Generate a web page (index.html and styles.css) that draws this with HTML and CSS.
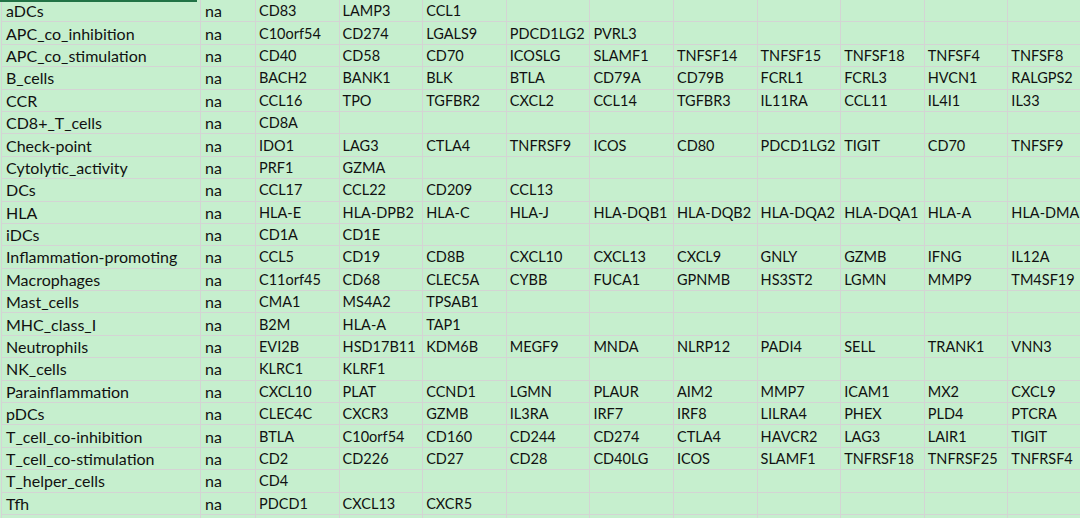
FILE: index.html
```html
<!DOCTYPE html>
<html>
<head>
<meta charset="utf-8">
<link rel="stylesheet" href="styles.css">
</head>
<body>
<div class="sheet">
  <div class="selection"></div>
  <table class="grid">
    <colgroup>
      <col class="col-a"><col class="col-b">
      <col class="col-g"><col class="col-g"><col class="col-g"><col class="col-g"><col class="col-g">
      <col class="col-g"><col class="col-g"><col class="col-g"><col class="col-g"><col class="col-g">
    </colgroup>
    <tbody>
      <tr><td>aDCs</td><td>na</td><td>CD83</td><td>LAMP3</td><td>CCL1</td><td></td><td></td><td></td><td></td><td></td><td></td><td></td></tr>
      <tr><td>APC_co_inhibition</td><td>na</td><td>C10orf54</td><td>CD274</td><td>LGALS9</td><td>PDCD1LG2</td><td>PVRL3</td><td></td><td></td><td></td><td></td><td></td></tr>
      <tr><td>APC_co_stimulation</td><td>na</td><td>CD40</td><td>CD58</td><td>CD70</td><td>ICOSLG</td><td>SLAMF1</td><td>TNFSF14</td><td>TNFSF15</td><td>TNFSF18</td><td>TNFSF4</td><td>TNFSF8</td></tr>
      <tr><td>B_cells</td><td>na</td><td>BACH2</td><td>BANK1</td><td>BLK</td><td>BTLA</td><td>CD79A</td><td>CD79B</td><td>FCRL1</td><td>FCRL3</td><td>HVCN1</td><td>RALGPS2</td></tr>
      <tr><td>CCR</td><td>na</td><td>CCL16</td><td>TPO</td><td>TGFBR2</td><td>CXCL2</td><td>CCL14</td><td>TGFBR3</td><td>IL11RA</td><td>CCL11</td><td>IL4I1</td><td>IL33</td></tr>
      <tr><td>CD8+_T_cells</td><td>na</td><td>CD8A</td><td></td><td></td><td></td><td></td><td></td><td></td><td></td><td></td><td></td></tr>
      <tr><td>Check-point</td><td>na</td><td>IDO1</td><td>LAG3</td><td>CTLA4</td><td>TNFRSF9</td><td>ICOS</td><td>CD80</td><td>PDCD1LG2</td><td>TIGIT</td><td>CD70</td><td>TNFSF9</td></tr>
      <tr><td>Cytolytic_activity</td><td>na</td><td>PRF1</td><td>GZMA</td><td></td><td></td><td></td><td></td><td></td><td></td><td></td><td></td></tr>
      <tr><td>DCs</td><td>na</td><td>CCL17</td><td>CCL22</td><td>CD209</td><td>CCL13</td><td></td><td></td><td></td><td></td><td></td><td></td></tr>
      <tr><td>HLA</td><td>na</td><td>HLA-E</td><td>HLA-DPB2</td><td>HLA-C</td><td>HLA-J</td><td>HLA-DQB1</td><td>HLA-DQB2</td><td>HLA-DQA2</td><td>HLA-DQA1</td><td>HLA-A</td><td>HLA-DMA</td></tr>
      <tr><td>iDCs</td><td>na</td><td>CD1A</td><td>CD1E</td><td></td><td></td><td></td><td></td><td></td><td></td><td></td><td></td></tr>
      <tr><td>Inflammation-promoting</td><td>na</td><td>CCL5</td><td>CD19</td><td>CD8B</td><td>CXCL10</td><td>CXCL13</td><td>CXCL9</td><td>GNLY</td><td>GZMB</td><td>IFNG</td><td>IL12A</td></tr>
      <tr><td>Macrophages</td><td>na</td><td>C11orf45</td><td>CD68</td><td>CLEC5A</td><td>CYBB</td><td>FUCA1</td><td>GPNMB</td><td>HS3ST2</td><td>LGMN</td><td>MMP9</td><td>TM4SF19</td></tr>
      <tr><td>Mast_cells</td><td>na</td><td>CMA1</td><td>MS4A2</td><td>TPSAB1</td><td></td><td></td><td></td><td></td><td></td><td></td><td></td></tr>
      <tr><td>MHC_class_I</td><td>na</td><td>B2M</td><td>HLA-A</td><td>TAP1</td><td></td><td></td><td></td><td></td><td></td><td></td><td></td></tr>
      <tr><td>Neutrophils</td><td>na</td><td>EVI2B</td><td>HSD17B11</td><td>KDM6B</td><td>MEGF9</td><td>MNDA</td><td>NLRP12</td><td>PADI4</td><td>SELL</td><td>TRANK1</td><td>VNN3</td></tr>
      <tr><td>NK_cells</td><td>na</td><td>KLRC1</td><td>KLRF1</td><td></td><td></td><td></td><td></td><td></td><td></td><td></td><td></td></tr>
      <tr><td>Parainflammation</td><td>na</td><td>CXCL10</td><td>PLAT</td><td>CCND1</td><td>LGMN</td><td>PLAUR</td><td>AIM2</td><td>MMP7</td><td>ICAM1</td><td>MX2</td><td>CXCL9</td></tr>
      <tr><td>pDCs</td><td>na</td><td>CLEC4C</td><td>CXCR3</td><td>GZMB</td><td>IL3RA</td><td>IRF7</td><td>IRF8</td><td>LILRA4</td><td>PHEX</td><td>PLD4</td><td>PTCRA</td></tr>
      <tr><td>T_cell_co-inhibition</td><td>na</td><td>BTLA</td><td>C10orf54</td><td>CD160</td><td>CD244</td><td>CD274</td><td>CTLA4</td><td>HAVCR2</td><td>LAG3</td><td>LAIR1</td><td>TIGIT</td></tr>
      <tr><td>T_cell_co-stimulation</td><td>na</td><td>CD2</td><td>CD226</td><td>CD27</td><td>CD28</td><td>CD40LG</td><td>ICOS</td><td>SLAMF1</td><td>TNFRSF18</td><td>TNFRSF25</td><td>TNFRSF4</td></tr>
      <tr><td>T_helper_cells</td><td>na</td><td>CD4</td><td></td><td></td><td></td><td></td><td></td><td></td><td></td><td></td><td></td></tr>
      <tr><td>Tfh</td><td>na</td><td>PDCD1</td><td>CXCL13</td><td>CXCR5</td><td></td><td></td><td></td><td></td><td></td><td></td><td></td></tr>
      <tr><td></td><td></td><td></td><td></td><td></td><td></td><td></td><td></td><td></td><td></td><td></td><td></td></tr>
    </tbody>
  </table>
</div>
</body>
</html>
```
FILE: styles.css
```css
html, body {
  margin: 0;
  padding: 0;
  background: #c6efce;
}
.sheet {
  position: relative;
  width: 1080px;
  height: 518px;
  overflow: hidden;
  background: #c6efce;
}
.selection {
  position: absolute;
  left: 0;
  top: 0;
  width: 197px;
  height: 2px;
  background: #217346;
  z-index: 2;
}
.grid {
  border-collapse: collapse;
  table-layout: fixed;
  width: 1091px;
  margin-left: 1px;
  font-family: Lato, "Open Sans", sans-serif;
  font-size: 14.5px;
  color: #111;
}
.col-a { width: 199px; }
.col-b { width: 55px; }
.col-g { width: 83.6px; }
.grid td {
  height: 21.4px;
  padding: 0 0 0 3px;
  border: 1px solid #d4d4d4;
  border-top: none;
  white-space: nowrap;
  overflow: visible;
  line-height: 21px;
  vertical-align: middle;
}
.grid td:first-child,
.grid td:nth-child(2) {
  font-size: 16px;
  padding-left: 4px;
}
.grid tr:first-child td {
  border-top: none;
}
```
